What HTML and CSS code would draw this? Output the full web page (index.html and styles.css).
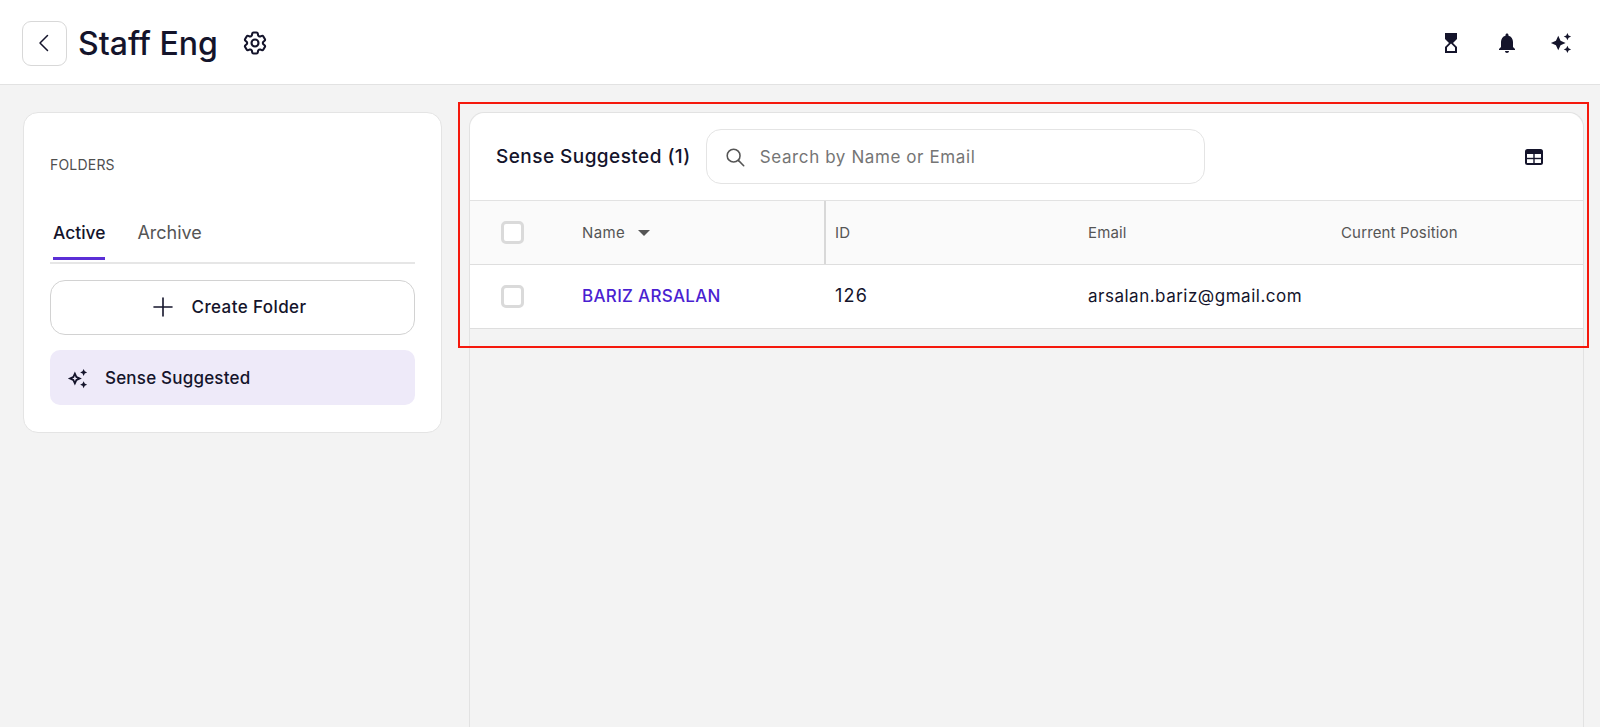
FILE: index.html

```html
<!doctype html>
<html>
    <head>
        <meta charset="utf-8">
        <title>Staff Eng</title>
        <link rel="stylesheet" href="styles.css">
    </head>
    <body>
        <header class="topbar">
            <button class="back-button">
                <svg width="24" height="24" viewBox="0 0 24 24" fill="none" stroke="#14142b" stroke-width="1.5" stroke-linecap="round" stroke-linejoin="round"><path d="M14.5 4.5l-7.5 7.5 7.5 7.5"/></svg>
            </button>
            <h1 class="page-title">Staff Eng</h1>
            <svg class="gear" width="28" height="28" viewBox="0 0 24 24" fill="none" stroke="#14142b" stroke-width="1.8"><path d="M9.594 3.94c.09-.542.56-.94 1.11-.94h2.593c.55 0 1.02.398 1.11.94l.213 1.281c.063.374.313.686.645.87.074.04.147.083.22.127.325.196.72.257 1.075.124l1.217-.456a1.125 1.125 0 0 1 1.37.49l1.296 2.247a1.125 1.125 0 0 1-.26 1.431l-1.003.827c-.293.241-.438.613-.43.992a7.723 7.723 0 0 1 0 .255c-.008.378.137.75.43.991l1.004.827c.424.35.534.955.26 1.43l-1.298 2.247a1.125 1.125 0 0 1-1.369.491l-1.217-.456c-.355-.133-.75-.072-1.076.124a6.47 6.47 0 0 1-.22.128c-.331.183-.581.495-.644.869l-.213 1.281c-.09.543-.56.94-1.11.94h-2.594c-.55 0-1.019-.398-1.11-.94l-.213-1.281c-.062-.374-.312-.686-.644-.87a6.52 6.52 0 0 1-.22-.127c-.325-.196-.72-.257-1.076-.124l-1.217.456a1.125 1.125 0 0 1-1.369-.49l-1.297-2.247a1.125 1.125 0 0 1 .26-1.431l1.004-.827c.292-.24.437-.613.43-.991a6.932 6.932 0 0 1 0-.255c.007-.38-.138-.751-.43-.992l-1.004-.827a1.125 1.125 0 0 1-.26-1.43l1.297-2.247a1.125 1.125 0 0 1 1.37-.491l1.216.456c.356.133.751.072 1.076-.124.072-.044.146-.086.22-.128.332-.183.582-.495.644-.869l.214-1.28Z"/><circle cx="12" cy="12" r="3"/></svg>
            <div class="topbar-icons">
                <svg width="24" height="24" viewBox="0 0 24 24" fill="#14142b"><path d="M6 2v6h.01L6 8.01 10 12l-4 4 .01.01H6V22h12v-5.99h-.01L18 16l-4-4 4-3.99-.01-.01H18V2H6zm10 14.5V20H8v-3.5l4-4 4 4z"/></svg>
                <svg width="24" height="24" viewBox="0 0 24 24" fill="#14142b"><path d="M12 22c1.1 0 2-.9 2-2h-4c0 1.1.89 2 2 2zm6-6v-5c0-3.07-1.64-5.64-4.5-6.32V4c0-.83-.67-1.5-1.5-1.5s-1.5.67-1.5 1.5v.68C7.63 5.36 6 7.92 6 11v5l-2 2v1h16v-1l-2-2z"/></svg>
                <svg width="22" height="22" viewBox="0 0 24 24" fill="#14142b"><path d="M19 9l1.25-2.75L23 5l-2.75-1.25L19 1l-1.25 2.75L15 5l2.75 1.25L19 9zm-7.5.5L9 4 6.5 9.5 1 12l5.5 2.5L9 20l2.5-5.5L17 12l-5.5-2.5zM19 15l-1.25 2.75L15 19l2.75 1.25L19 23l1.25-2.75L23 19l-2.75-1.25L19 15z"/></svg>
            </div>
        </header>

        <main class="content">
            <aside class="folders-card">
                <div class="folders-label">FOLDERS</div>
                <div class="tabs">
                    <div class="tab tab-active">Active</div>
                    <div class="tab">Archive</div>
                </div>
                <button class="create-folder">
                    <svg width="24" height="24" viewBox="0 0 24 24" fill="none" stroke="#14142b" stroke-width="1.6" stroke-linecap="round"><path d="M12 3v18M3 12h18"/></svg>
                    Create Folder
                </button>
                <div class="folder-item">
                    <svg width="21" height="21" viewBox="0 0 24 24" fill="#14142b"><path d="M19 9l1.25-2.75L23 5l-2.75-1.25L19 1l-1.25 2.75L15 5l2.75 1.25zm0 6-1.25 2.75L15 19l2.75 1.25L19 23l1.25-2.75L23 19l-2.75-1.25zm-7.5-5.5L9 4 6.5 9.5 1 12l5.5 2.5L9 20l2.5-5.5L17 12l-5.5-2.5zm-1.51 3.49L9 15.17l-.99-2.18L5.83 12l2.18-.99L9 8.83l.99 2.18 2.18.99-2.18.99z"/></svg>
                    Sense Suggested
                </div>
            </aside>

            <section class="panel">
                <div class="panel-card">
                    <div class="panel-head">
                        <div class="panel-title">Sense Suggested (1)</div>
                        <div class="search">
                            <svg width="22" height="22" viewBox="0 0 24 24" fill="none" stroke="#555" stroke-width="1.7" stroke-linecap="round"><circle cx="10.5" cy="10.5" r="7"/><path d="M16 16l5.5 5.5"/></svg>
                            <span>Search by Name or Email</span>
                        </div>
                        <svg class="columns-icon" width="20" height="20" viewBox="0 0 20 20"><rect x="1" y="2" width="18" height="16" rx="2.5" fill="#14142b"/><rect x="3" y="7" width="6.3" height="3.8" fill="#fff"/><rect x="10.7" y="7" width="6.3" height="3.8" fill="#fff"/><rect x="3" y="12.2" width="6.3" height="3.8" fill="#fff"/><rect x="10.7" y="12.2" width="6.3" height="3.8" fill="#fff"/></svg>
                    </div>
                    <div class="table-row table-header">
                        <div class="cell cell-check"><span class="checkbox"></span></div>
                        <div class="cell cell-name">Name <span class="caret"></span></div>
                        <div class="cell cell-id">ID</div>
                        <div class="cell cell-email">Email</div>
                        <div class="cell">Current Position</div>
                    </div>
                    <div class="table-row table-body">
                        <div class="cell cell-check"><span class="checkbox"></span></div>
                        <div class="cell cell-name"><a class="candidate-link">BARIZ ARSALAN</a></div>
                        <div class="cell cell-id">126</div>
                        <div class="cell cell-email">arsalan.bariz@gmail.com</div>
                        <div class="cell"></div>
                    </div>
                </div>
            </section>
        </main>

        <div class="highlight-box"></div>
    </body>
</html>
```

FILE: styles.css

```css
html, body {
    margin: 0;
    height: 727px;
    overflow: hidden;
}

body {
    font-family: "Inter", "Liberation Sans", sans-serif;
    color: #14142b;
    background: #f3f3f3;
    position: relative;
}

.topbar {
    display: flex;
    align-items: center;
    box-sizing: border-box;
    height: 85px;
    padding: 2px 28px 0 22px;
    background: #fff;
    border-bottom: 1px solid #e2e2e2;
}

.back-button {
    display: flex;
    align-items: center;
    justify-content: center;
    box-sizing: border-box;
    width: 45px;
    height: 45px;
    padding: 0;
    background: #fff;
    border: 1px solid #d8d8d8;
    border-radius: 9px;
}

.page-title {
    margin: 0 0 0 11px;
    font-size: 32px;
    font-weight: 500;
    letter-spacing: 0;
}

.gear {
    margin-left: 23px;
}

.topbar-icons {
    display: flex;
    align-items: center;
    gap: 31.5px;
    margin-left: auto;
}

.content {
    display: flex;
    align-items: flex-start;
    height: 642px;
    padding-left: 23px;
    padding-right: 16px;
}

.folders-card {
    box-sizing: border-box;
    width: 419px;
    height: 321px;
    margin-top: 27px;
    padding: 0 26px;
    background: #fff;
    border: 1px solid #e4e4e4;
    border-radius: 15px;
}

.folders-label {
    margin-top: 43px;
    font-size: 14px;
    line-height: 18px;
    letter-spacing: .2px;
    color: #4f4f4f;
}

.tabs {
    display: flex;
    gap: 32px;
    margin-top: 40px;
    padding-left: 3px;
    border-bottom: 2px solid #e6e6e6;
}

.tab {
    height: 46px;
    box-sizing: border-box;
    margin-bottom: 2px;
    padding-top: 7px;
    font-size: 18px;
    line-height: 24px;
    color: #555;
}

.tab-active {
    color: #14142b;
    font-size: 17.4px;
    font-weight: 500;
    border-bottom: 3px solid #5b2fd6;
}

.create-folder {
    display: flex;
    align-items: center;
    justify-content: center;
    gap: 17px;
    box-sizing: border-box;
    width: 100%;
    height: 55px;
    margin-top: 16px;
    padding: 0 8px 2px 0;
    background: #fff;
    border: 1px solid #d2d2d2;
    border-radius: 15px;
    font-family: inherit;
    font-size: 17px;
    letter-spacing: .4px;
    font-weight: 500;
    color: #14142b;
}

.folder-item {
    display: flex;
    align-items: center;
    gap: 17px;
    box-sizing: border-box;
    height: 55px;
    margin-top: 15px;
    padding: 1px 0 0 17px;
    background: #eeeaf9;
    border-radius: 10px;
    font-size: 17px;
    letter-spacing: .2px;
    font-weight: 500;
}

.panel {
    flex: 1;
    height: 642px;
    margin-left: 27px;
}

.panel-card {
    box-sizing: border-box;
    height: 615px;
    margin-top: 27px;
    border: 1px solid #e2e2e2;
    border-bottom: 0;
    border-radius: 15px 15px 0 0;
}

.panel-head {
    display: flex;
    align-items: center;
    height: 87px;
    padding: 0 39px 0 26px;
    background: #fff;
    border-radius: 15px 15px 0 0;
    border-bottom: 1px solid #e2e2e2;
}

.panel-title {
    font-size: 19px;
    letter-spacing: .45px;
    font-weight: 500;
    white-space: nowrap;
}

.search {
    display: flex;
    align-items: center;
    gap: 14px;
    box-sizing: border-box;
    width: 499px;
    height: 55px;
    margin-left: 15px;
    padding-left: 17px;
    border: 1px solid #e4e4e4;
    border-radius: 15px;
    font-size: 17px;
    letter-spacing: .6px;
    color: #757575;
}

.columns-icon {
    margin-left: auto;
}

.table-row {
    display: flex;
    align-items: center;
    height: 63px;
    background: #fff;
    border-bottom: 1px solid #dedede;
    font-size: 17px;
    letter-spacing: .5px;
}

.table-header {
    background: #fafafa;
    font-size: 15px;
    letter-spacing: .15px;
    color: #555;
}

.cell {
    display: flex;
    align-items: center;
    box-sizing: border-box;
    height: 100%;
}

.table-body .cell {
    padding-bottom: 2px;
}

.table-body .cell-check {
    padding-bottom: 0;
}

.cell-check {
    width: 112px;
    padding-left: 31px;
}

.cell-name {
    width: 244px;
    gap: 13px;
}

.table-header .cell-name {
    border-right: 2px solid #d8d8d8;
    letter-spacing: .4px;
}

.cell-id {
    width: 262px;
    padding-left: 9px;
}

.table-body .cell-id {
    font-size: 18px;
    letter-spacing: 1.2px;
}

.cell-email {
    width: 253px;
}

.checkbox {
    box-sizing: border-box;
    display: block;
    width: 23px;
    height: 23px;
    background: #fff;
    border: 3px solid #dadada;
    border-radius: 5px;
}

.caret {
    width: 0;
    height: 0;
    border-left: 6px solid transparent;
    border-right: 6px solid transparent;
    border-top: 6px solid #555;
}

.candidate-link {
    color: #4a1fd1;
    font-weight: 500;
    letter-spacing: .3px;
}

.highlight-box {
    position: absolute;
    left: 458px;
    top: 102px;
    width: 1127px;
    height: 242px;
    border: 2px solid #f5180c;
}
```
